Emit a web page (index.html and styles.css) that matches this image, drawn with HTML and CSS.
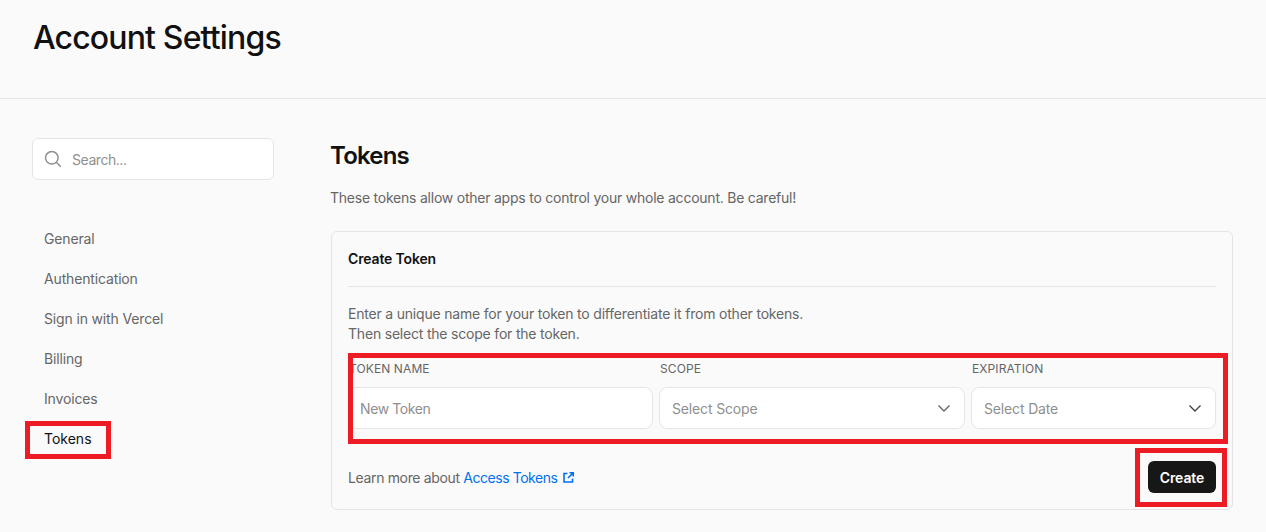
FILE: index.html
```html
<!DOCTYPE html>
<html lang="en">
<head>
<meta charset="utf-8">
<title>Account Settings</title>
<link rel="stylesheet" href="styles.css">
</head>
<body>
<header class="page-header"><h1>Account Settings</h1></header>
<div class="layout">
  <aside class="sidebar">
    <div class="search">
      <svg class="search-icon" width="18" height="18" viewBox="0 0 18 18" fill="none" stroke="#8f8f8f" stroke-width="1.5"><circle cx="7.800" cy="7.800" r="6.300"/><path d="M12.500 12.500l4.300 4.300"/></svg>
      <span>Search...</span>
    </div>
    <nav class="nav">
      <a>General</a>
      <a>Authentication</a>
      <a>Sign in with Vercel</a>
      <a>Billing</a>
      <a>Invoices</a>
      <a class="active">Tokens</a>
    </nav>
  </aside>
  <main class="main">
    <h2>Tokens</h2>
    <p class="lead">These tokens allow other apps to control your whole account. Be careful!</p>
    <section class="card">
      <h3>Create Token</h3>
      <hr class="rule">
      <p class="desc">Enter a unique name for your token to differentiate it from other tokens.<br>Then select the scope for the token.</p>
      <div class="fields">
        <div class="field name"><label>TOKEN NAME</label><div class="control"><span>New Token</span></div></div>
        <div class="field scope"><label>SCOPE</label><div class="control"><span>Select Scope</span><svg width="12" height="7" viewBox="0 0 12 7" fill="none" stroke="#666" stroke-width="1.400"><path d="M.5.500l5.500 5.500 5.500-5.500"/></svg></div></div>
        <div class="field date"><label>EXPIRATION</label><div class="control"><span>Select Date</span><svg width="12" height="7" viewBox="0 0 12 7" fill="none" stroke="#444" stroke-width="1.400"><path d="M.5.500l5.500 5.500 5.500-5.500"/></svg></div></div>
      </div>
      <div class="card-footer">
        <p>Learn more about <a>Access Tokens <svg width="11" height="11" viewBox="0 0 11 11" fill="none" stroke="#0070f3" stroke-width="1.600"><path d="M4.500 1.500H1v8.500h8.500V6.500"/><path d="M5 6l5-5M6.500.8h3.700v3.700"/></svg></a></p>
        <button class="create">Create</button>
      </div>
    </section>
  </main>
</div>
<div class="mark mark-nav"></div>
<div class="mark mark-fields"></div>
<div class="mark mark-create"></div>
</body>
</html>
```
FILE: styles.css
```css
* { box-sizing: border-box; }
html, body { margin: 0; height: 532px; overflow: hidden; }
body { background: #fafafa; font-family: Inter, "Liberation Sans", sans-serif; font-size: 14px; color: #666; position: relative; }
.page-header { height: 99px; border-bottom: 1px solid #e5e5e5; padding: 18px 0 0 33px; }
h1 { margin: 0; font-size: 32px; line-height: 40px; font-weight: 500; color: #111; letter-spacing: -0.85px; }
.layout { display: flex; padding: 39px 33px 0 32px; }
.sidebar { width: 242px; margin-right: 57px; flex: none; }
.search { height: 42px; background: #fff; border: 1px solid #e5e5e5; border-radius: 6px; display: flex; align-items: center; padding-left: 11px; gap: 10px; color: #8f8f8f; letter-spacing: -0.45px; }
.search-icon { flex: none; }
.nav { display: flex; flex-direction: column; margin-top: 39px; padding-left: 12px; }
.nav a { height: 40px; line-height: 40px; color: #666; letter-spacing: -0.15px; }
.nav a.active { color: #111; letter-spacing: 0; }
.main { flex: 1; min-width: 0; }
h2 { margin: 2px 0 0 -1px; font-size: 24px; line-height: 32px; font-weight: 600; color: #111; letter-spacing: -0.8px; }
.lead { margin: 14px 0 0 -1px; line-height: 24px; letter-spacing: -0.23px; }
.card { margin-top: 21px; height: 279px; border: 1px solid #e5e5e5; border-radius: 6px; padding: 0 16px; }
h3 { margin: 0; height: 54px; line-height: 54px; font-size: 14px; font-weight: 600; color: #111; letter-spacing: -0.15px; }
.rule { margin: 0; border: 0; border-top: 1px solid #e5e5e5; }
.desc { margin: 17px 0 0; line-height: 20px; letter-spacing: -0.2px; }
.fields { display: flex; gap: 6px; margin-top: 15px; }
.field { display: flex; flex-direction: column; }
.field.name { width: 305px; }
.field.scope { width: 306px; }
.field.date { width: 245px; }
.field label { font-size: 12px; line-height: 20px; height: 28px; padding-left: 1px; letter-spacing: 0.1px; color: #666; }
.control { height: 42px; background: #fff; border: 1px solid #e5e5e5; border-radius: 8px; display: flex; align-items: center; justify-content: space-between; padding: 0 14px 0 12px; color: #8f8f8f; letter-spacing: -0.15px; }
.field.name .control { padding-left: 11px; letter-spacing: -0.4px; }
.card-footer { display: flex; align-items: center; justify-content: space-between; margin-top: 32px; }
.card-footer p { margin: 0; letter-spacing: -0.35px; }
.card-footer a { color: #0070f3; letter-spacing: -0.45px; }
.card-footer svg { margin-left: 2px; }
.create { width: 68px; height: 32px; background: #171717; color: #fff; border: 0; border-radius: 6px; font: 600 14px Inter, "Liberation Sans", sans-serif; padding: 0; letter-spacing: -0.1px; }
.mark { position: absolute; border: 5px solid #ed1c24; }
.mark-nav { left: 25px; top: 421px; width: 86px; height: 38px; }
.mark-fields { left: 348px; top: 353px; width: 880px; height: 91px; }
.mark-create { left: 1135px; top: 448px; width: 92px; height: 59px; }
```
